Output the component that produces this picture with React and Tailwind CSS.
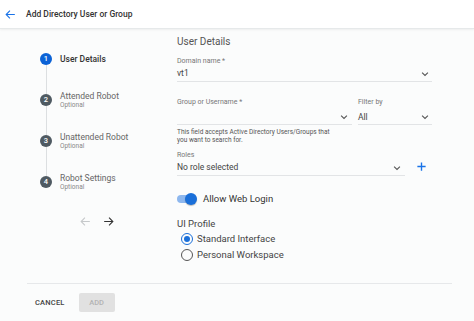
import { useState } from "react";

const steps = [
  { n: 1, title: "User Details", active: true },
  { n: 2, title: "Attended Robot", sub: "Optional" },
  { n: 3, title: "Unattended Robot", sub: "Optional" },
  { n: 4, title: "Robot Settings", sub: "Optional" },
];

function Chevron({ className = "" }) {
  return (
    <svg width="10" height="10" viewBox="0 0 24 24" className={className}>
      <path d="M5 8.5l7 7 7-7" fill="none" stroke="#555" strokeWidth="2.6" />
    </svg>
  );
}

function Arrow({ left, color }) {
  return (
    <svg width="13" height="13" viewBox="0 0 24 24">
      <path
        d={left ? "M20 12H5M11 5l-7 7 7 7" : "M4 12h15M13 5l7 7-7 7"}
        fill="none"
        stroke={color}
        strokeWidth="2"
      />
    </svg>
  );
}

export default function App() {
  const [profile, setProfile] = useState("standard");

  return (
    <div
      className="w-[474px] h-[321px] flex flex-col bg-[#fbfcfc] text-[#333] overflow-hidden"
      style={{ fontFamily: "Roboto, 'Liberation Sans', sans-serif" }}
    >
      {/* header */}
      <div className="h-[29px] shrink-0 flex items-center bg-white border-b border-[#e6e9ea] shadow-[0_1px_2px_rgba(0,0,0,0.06)]">
        <div className="w-[26px] pl-[4px] flex">
          <Arrow left color="#1a73e8" />
        </div>
        <span className="text-[8.5px] font-medium text-[#333]">
          Add Directory User or Group
        </span>
      </div>

      {/* body */}
      <div className="flex flex-1 min-h-0">
        {/* stepper */}
        <div className="w-[177px] shrink-0 pt-[24px] pl-[40px]">
          {steps.map((s, i) => (
            <div key={s.n}>
              <div className="h-[12px] flex items-center">
                <div
                  className={`w-[12px] h-[12px] rounded-full flex items-center justify-center text-white text-[7.5px] font-medium ${
                    s.active ? "bg-[#0b62d6]" : "bg-[#4f5a62]"
                  }`}
                >
                  {s.n}
                </div>
                <div className="ml-[8px] flex flex-col leading-none">
                  <span
                    className={`text-[8.5px] ${
                      s.active ? "font-medium text-[#333]" : "text-[#666]"
                    }`}
                  >
                    {s.title}
                  </span>
                  {s.sub && (
                    <span className="text-[6.5px] text-[#888] mt-[1px]">
                      {s.sub}
                    </span>
                  )}
                </div>
              </div>
              {i < steps.length - 1 && (
                <div className="ml-[5.5px] w-px h-[29px] bg-[#dcdfe1]" />
              )}
            </div>
          ))}
          <div className="mt-[27px] ml-[39px] flex items-center gap-[10px]">
            <Arrow left color="#c6c9cb" />
            <Arrow color="#333" />
          </div>
        </div>

        {/* form */}
        <div className="flex-1 pt-[6px] pr-[42px]">
          <div className="text-[10px] leading-[14px] text-[#555]">
            User Details
          </div>

          <div className="mt-[7px] text-[7px] leading-[10px] text-[#777]">
            Domain name *
          </div>
          <div className="h-[16px] flex items-center justify-between border-b border-[#e2e4e6]">
            <span className="text-[8.5px] text-[#444]">vt1</span>
            <Chevron className="mr-[2px]" />
          </div>

          <div className="mt-[15px] flex gap-[6px]">
            <div className="w-[175px]">
              <div className="text-[7px] leading-[10px] text-[#777]">
                Group or Username *
              </div>
              <div className="h-[15px] mt-[3px] flex items-center justify-end border-b border-[#e2e4e6]">
                <Chevron className="mr-[3px]" />
              </div>
            </div>
            <div className="flex-1">
              <div className="text-[7px] leading-[10px] text-[#777]">
                Filter by
              </div>
              <div className="h-[15px] mt-[3px] flex items-center justify-between border-b border-[#e2e4e6]">
                <span className="text-[8.5px] text-[#444]">All</span>
                <Chevron className="mr-[2px]" />
              </div>
            </div>
          </div>

          <div className="mt-[3px] text-[6.5px] leading-[8px] text-[#555]">
            This field accepts Active Directory Users/Groups that
            <br />
            you want to search for.
          </div>

          <div className="mt-[6px] text-[7px] leading-[10px] text-[#777]">
            Roles
          </div>
          <div className="flex items-center">
            <div className="w-[228px] h-[16px] flex items-center justify-between border-b border-[#e2e4e6]">
              <span className="text-[8.5px] text-[#444]">No role selected</span>
              <Chevron className="mr-[3px]" />
            </div>
            <svg width="11" height="11" viewBox="0 0 24 24" className="ml-[11px] -mt-[3px]">
              <path d="M12 3v18M3 12h18" stroke="#1a73e8" strokeWidth="3" />
            </svg>
          </div>

          <div className="mt-[16px] flex items-center">
            <div className="relative w-[20px] h-[12px] flex items-center">
              <div className="w-[18px] h-[8px] rounded-full bg-[#8db7ee]" />
              <div className="absolute right-0 w-[12px] h-[12px] rounded-full bg-[#1a6fd9] shadow-[0_1px_1px_rgba(0,0,0,0.25)]" />
            </div>
            <span className="ml-[6px] text-[9.5px] text-[#333]">
              Allow Web Login
            </span>
          </div>

          <div className="mt-[12px] text-[9.5px] leading-[12px] text-[#444]">
            UI Profile
          </div>

          <div className="mt-[3px] ml-[4px] flex flex-col gap-[4px]">
            {[
              ["standard", "Standard Interface"],
              ["personal", "Personal Workspace"],
            ].map(([k, label]) => (
              <label
                key={k}
                className="h-[12px] flex items-center cursor-pointer"
                onClick={() => setProfile(k)}
              >
                <span
                  className={`w-[12px] h-[12px] rounded-full border-[1.5px] flex items-center justify-center ${
                    profile === k ? "border-[#1a6fd9]" : "border-[#555]"
                  }`}
                >
                  {profile === k && (
                    <span className="w-[6px] h-[6px] rounded-full bg-[#1a6fd9]" />
                  )}
                </span>
                <span className="ml-[4px] text-[9.5px] text-[#444]">
                  {label}
                </span>
              </label>
            ))}
          </div>
        </div>
      </div>

      {/* footer */}
      <div className="h-[38px] shrink-0 mx-[27px] mr-[22px] border-t border-[#e6e8ea] flex items-center pl-[8px]">
        <span className="text-[7.5px] font-medium text-[#444] tracking-[0.2px]">
          CANCEL
        </span>
        <div className="ml-[14px] w-[36px] h-[19px] rounded-[2px] bg-[#e1e1e1] flex items-center justify-center text-[7.5px] font-medium text-[#b3b3b3]">
          ADD
        </div>
      </div>
    </div>
  );
}
